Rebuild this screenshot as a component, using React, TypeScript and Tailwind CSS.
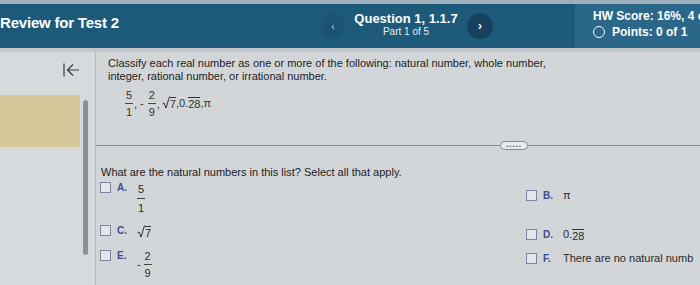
import React from 'react';

const Frac: React.FC<{ n: string; d: string; className?: string; gap?: string }> = ({ n, d, className, gap }) => (
  <span className={`inline-flex flex-col items-center leading-[10px] align-middle ${className ?? ''}`}>
    <span>{n}</span>
    <span className={`w-full min-w-[8px] border-t border-[#444] ${gap ?? 'my-[2px]'}`} />
    <span>{d}</span>
  </span>
);

const Sqrt7: React.FC = () => (
  <span className="inline-flex items-end">
    <svg width="8" height="13" viewBox="0 0 8 13" className="mb-[1px]">
      <path d="M0.5 8 L2 7 L4 12 L7.5 0.5" stroke="#333" strokeWidth="1" fill="none" />
    </svg>
    <span className="border-t border-[#333] leading-none pt-[1px]">7</span>
  </span>
);

const Check: React.FC = () => (
  <span className="w-[11px] h-[11px] border border-[#7d85a3] bg-[#e4e6ea] shrink-0" />
);

const Option: React.FC<{ letter: string; children: React.ReactNode; className?: string }> = ({ letter, children, className }) => (
  <div className={`flex items-start ${className ?? ''}`}>
    <Check />
    <span className="ml-[6px] w-[20px] shrink-0 text-[10px] leading-[11px] font-bold text-[#3c4c95]">{letter}</span>
    <div className="text-[11px] leading-[11px] text-[#2a2a2a]">{children}</div>
  </div>
);

export default function App() {
  return (
    <div className="w-[700px] h-[285px] overflow-hidden bg-[#d3d6d9] flex flex-col" style={{ fontFamily: '"Liberation Sans", Arial, sans-serif' }}>
      <div className="h-[4px] bg-[#9eb0bc]" />
      {/* header */}
      <div className="h-[44px] flex bg-[#1d5a7a] text-white">
        <div className="w-[320px] shrink-0 flex items-center pb-[6px]">
          <span className="text-[15px] font-bold tracking-[-0.2px]">Review for Test 2</span>
        </div>
        <div className="w-[255px] shrink-0 flex items-center">
          <span className="w-[24px] h-[24px] rounded-full bg-[#1a5373] flex items-center justify-center text-[10px] text-[#c9d6de] ml-[1px]">‹</span>
          <div className="w-[122px] flex flex-col items-center pb-[4px]">
            <span className="text-[13px] font-bold leading-[15px] whitespace-nowrap">Question 1, 1.1.7</span>
            <span className="text-[10px] leading-[12px] text-[#e5edf2]">Part 1 of 5</span>
          </div>
          <span className="w-[26px] h-[26px] rounded-full bg-[#16415c] flex items-center justify-center text-[12px] font-bold">›</span>
        </div>
        <div className="flex-1 min-w-0 overflow-hidden bg-[#2a6788] pl-[18px] flex flex-col justify-center pb-[4px]">
          <span className="text-[12px] font-bold leading-[14px] whitespace-nowrap">HW Score: 16%, 4 of 25</span>
          <div className="flex items-center mt-[2px]">
            <span className="w-[12px] h-[12px] shrink-0 rounded-full border-[1.5px] border-white" />
            <span className="ml-[7px] text-[12px] font-bold leading-[14px] whitespace-nowrap">Points: 0 of 1</span>
          </div>
        </div>
      </div>
      <div className="h-[4px] bg-[#c3c7cb]" />
      {/* body */}
      <div className="flex-1 flex min-h-0">
        <div className="w-[96px] shrink-0 border-r border-[#b5b9bd] bg-[#d7dadc] flex flex-col">
          <div className="h-[43px] flex justify-end pr-[15px] pt-[11px]">
            <svg width="17" height="14" viewBox="0 0 17 14">
              <path d="M1 0.5 V13.5 M16 7 H4.5 M10 1.5 L4.5 7 L10 12.5" stroke="#3a3d40" strokeWidth="1.2" fill="none" />
            </svg>
          </div>
          <div className="flex items-start">
            <div className="w-[80px] h-[52px] bg-[#d5c99b]" />
            <div className="ml-[3px] mt-[5px] w-[5px] h-[155px] rounded-full bg-[#8d9195]" />
          </div>
        </div>
        <div className="flex-1 min-w-0 overflow-hidden flex flex-col">
          <div className="pl-[12px] pt-[5px] text-[11px] leading-[13px] text-[#222]">
            <div className="whitespace-nowrap">Classify each real number as one or more of the following: natural number, whole number,</div>
            <div>integer, rational number, or irrational number.</div>
            <div className="mt-[7px] ml-[17px] flex items-center text-[11px] text-[#333]">
              <Frac n="5" d="1" gap="my-[3px]" />
              <span className="self-end mb-[6px] mx-[1px]">,</span>
              <span className="ml-[2px]">-</span>
              <Frac n="2" d="9" className="ml-[4px]" gap="my-[3px]" />
              <span className="self-end mb-[6px] mx-[1px]">,</span>
              <span className="ml-[1px]"><Sqrt7 /></span>
              <span>,0.</span>
              <span className="border-t border-[#333] leading-none pt-[1px]">28</span>
              <span>,π</span>
            </div>
          </div>
          <div className="mt-[24px] flex items-center">
            <div className="flex-1 h-px bg-[#8a8e92]" />
            <span className="w-[28px] h-[9px] shrink-0 rounded-full border border-[#7f8a96] bg-[#e8eaec] flex items-center justify-center text-[6px] leading-none text-[#4a6b8a] tracking-[1px]">•••••</span>
            <div className="w-[172px] shrink-0 h-px bg-[#8a8e92]" />
          </div>
          <div className="pl-[5px] pt-[16px] text-[11px] leading-[13px] text-[#222]">What are the natural numbers in this list? Select all that apply.</div>
          <div className="flex mt-[3px]">
            <div className="w-[430px] shrink-0 pl-[4px] flex flex-col">
              <Option letter="A.">
                <Frac n="5" d="1" className="mt-[2px]" gap="my-[4px]" />
              </Option>
              <Option letter="C." className="mt-[12px]">
                <Sqrt7 />
              </Option>
              <Option letter="E." className="mt-[10px]">
                <span className="inline-flex items-center">
                  <span className="mr-[3px]">-</span>
                  <Frac n="2" d="9" className="mt-[1px]" gap="my-[3px]" />
                </span>
              </Option>
            </div>
            <div className="flex-1 min-w-0 flex flex-col pt-[8px]">
              <Option letter="B.">
                <span>π</span>
              </Option>
              <Option letter="D." className="mt-[28px]">
                <span className="inline-flex">0.<span className="border-t border-[#333] leading-none pt-[1px]">28</span></span>
              </Option>
              <Option letter="F." className="mt-[11px]">
                <span className="whitespace-nowrap">There are no natural numb</span>
              </Option>
            </div>
          </div>
        </div>
      </div>
    </div>
  );
}
